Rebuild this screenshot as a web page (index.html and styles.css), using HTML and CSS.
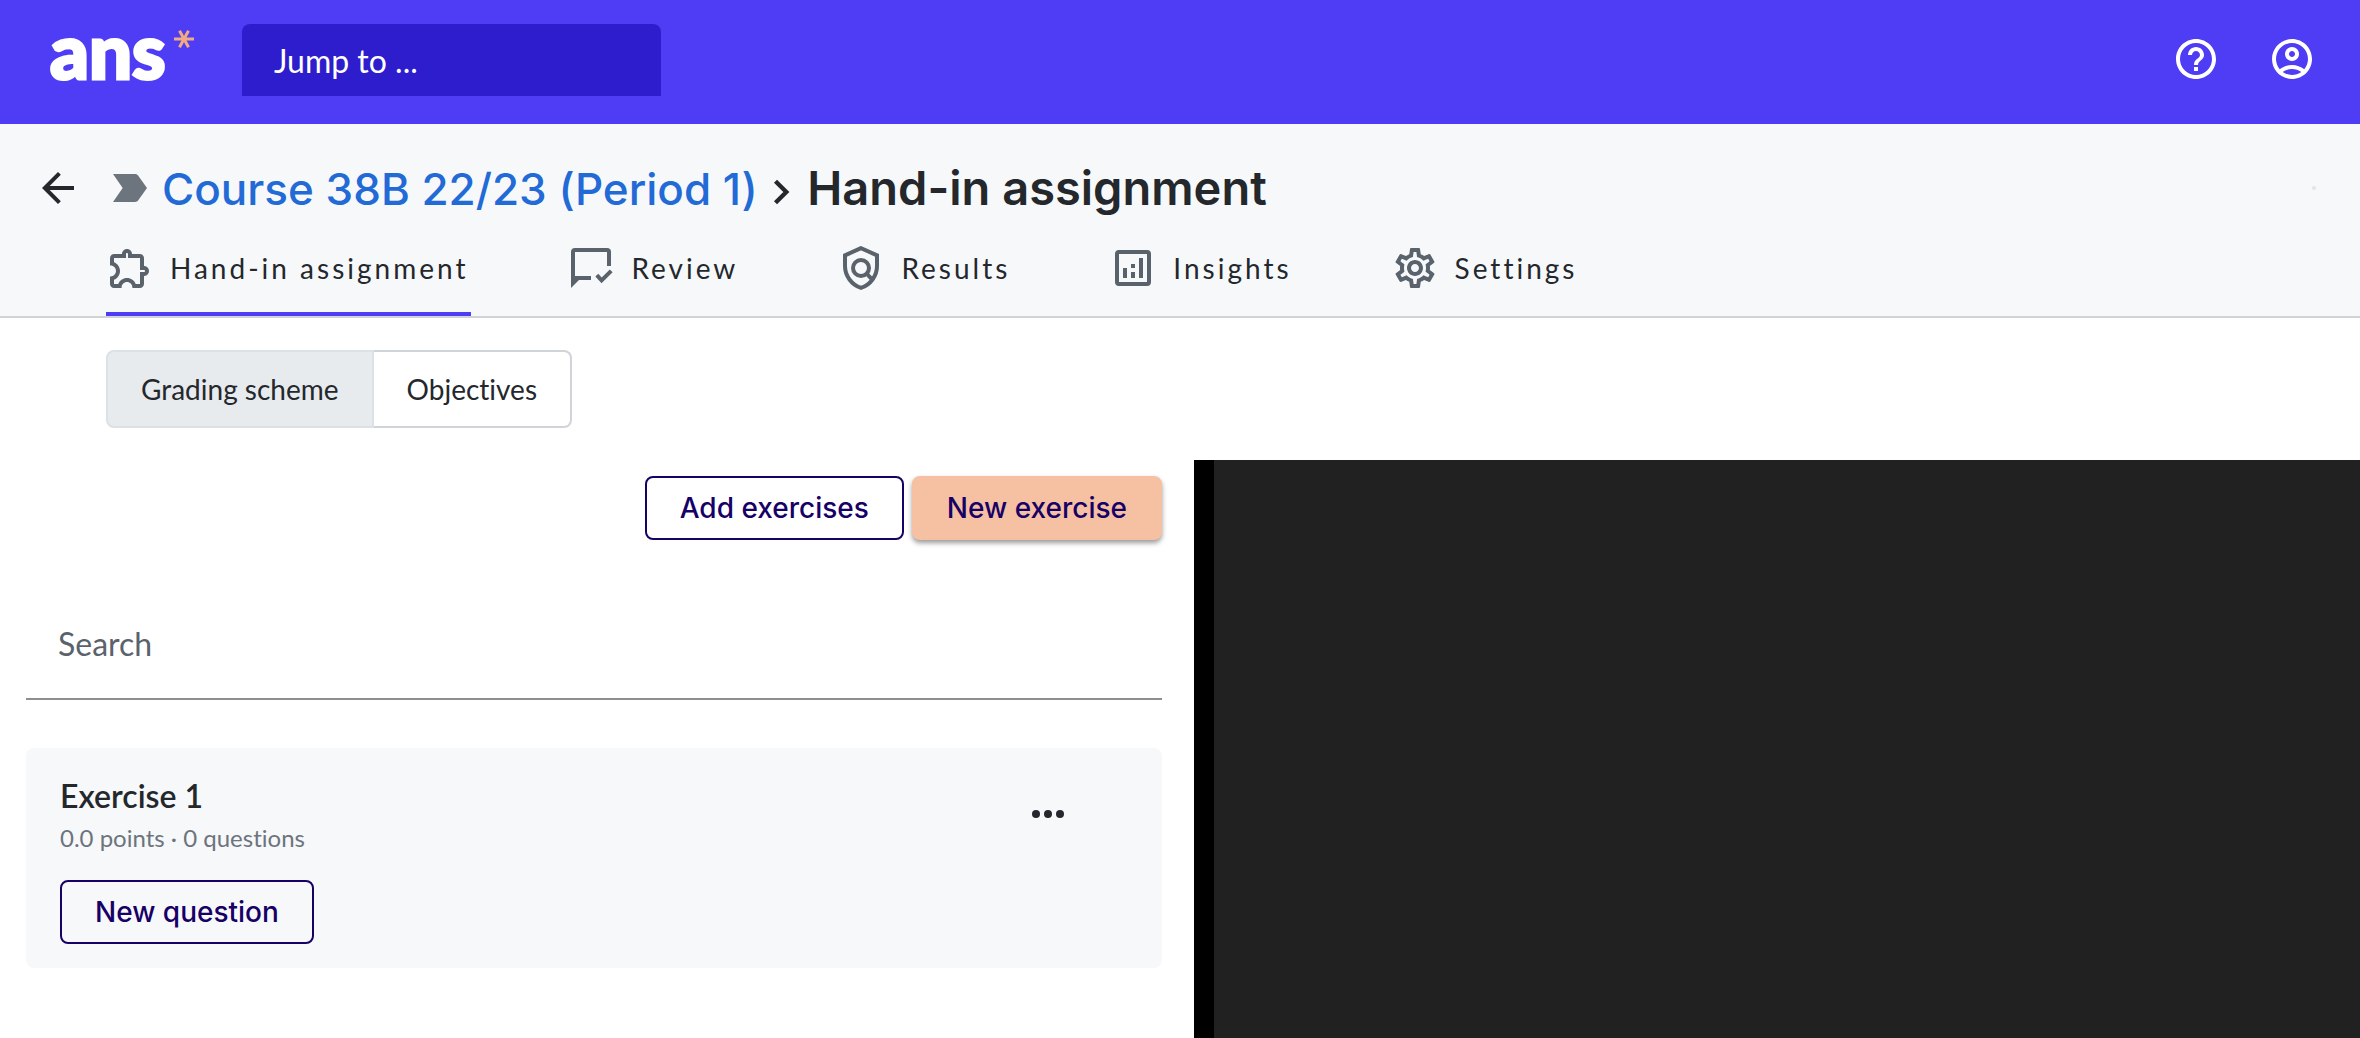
FILE: index.html
```html
<!DOCTYPE html>
<html lang="en">
<head>
    <meta charset="UTF-8">
    <meta name="viewport" content="width=device-width, initial-scale=1.0">
    <title>Hand-in assignment</title>
    <link rel="stylesheet" href="styles.css">
</head>
<body>
    <header class="topbar">
        <a class="logo" href="#" aria-label="ans">
            <span>ans</span>
            <svg class="logo-star" viewBox="0 0 20 18" aria-hidden="true">
                <path d="M0 9h20M5.5 .8l9 16.4M14.5 .8l-9 16.4"/>
            </svg>
        </a>
        <input type="text" class="jump" placeholder="Jump to ..." aria-label="Jump to">
        <div class="topbar-actions">
            <button class="icon-button" type="button" aria-label="Help">
                <svg class="icon" viewBox="0 0 24 24"><path d="M11 18h2v-2h-2v2zm1-16C6.48 2 2 6.48 2 12s4.48 10 10 10 10-4.48 10-10S17.52 2 12 2zm0 18c-4.41 0-8-3.59-8-8s3.59-8 8-8 8 3.59 8 8-3.59 8-8 8zm0-14c-2.21 0-4 1.79-4 4h2c0-1.1.9-2 2-2s2 .9 2 2c0 2-3 1.75-3 5h2c0-2.25 3-2.5 3-5 0-2.21-1.79-4-4-4z"/></svg>
            </button>
            <button class="icon-button" type="button" aria-label="Account">
                <svg class="icon" viewBox="0 0 24 24"><path d="M12 2C6.48 2 2 6.48 2 12s4.48 10 10 10 10-4.48 10-10S17.52 2 12 2zM7.35 18.5C8.66 17.56 10.26 17 12 17s3.34.56 4.65 1.5C15.34 19.44 13.74 20 12 20s-3.34-.56-4.65-1.5zm10.79-1.38C16.45 15.8 14.32 15 12 15s-4.45.8-6.14 2.12C4.7 15.73 4 13.95 4 12c0-4.42 3.58-8 8-8s8 3.58 8 8c0 1.95-.7 3.73-1.86 5.12z"/><path d="M12 6c-1.93 0-3.5 1.57-3.5 3.5S10.07 13 12 13s3.5-1.57 3.5-3.5S13.93 6 12 6zm0 5c-.83 0-1.5-.67-1.5-1.5S11.17 8 12 8s1.5.67 1.5 1.5S12.83 11 12 11z"/></svg>
            </button>
        </div>
    </header>

    <div class="subheader">
        <div class="title-row">
            <a class="back" href="#" aria-label="Back">
                <svg class="icon" viewBox="0 0 24 24"><path d="M20 11H7.83l5.59-5.59L12 4l-8 8 8 8 1.41-1.41L7.83 13H20v-2z"/></svg>
            </a>
            <svg class="icon label-icon" viewBox="0 0 24 24" aria-hidden="true"><path d="M3.5 18.99l11 .01c.67 0 1.27-.33 1.63-.84L20.5 12l-4.37-6.16c-.36-.51-.96-.84-1.63-.84l-11 .01L8.34 12 3.5 18.99z"/></svg>
            <h1><a href="#">Course 38B 22/23 (Period 1)</a> <svg class="crumb" viewBox="0 0 16 24" aria-hidden="true"><path d="M2 2l10 10-10 10"/></svg> <span>Hand-in assignment</span></h1>
            <span class="status-dot"></span>
        </div>
        <nav class="tabs">
            <a class="tab active" href="#">
                <svg class="icon" viewBox="0 0 24 24"><path d="M10.5 4.5c.28 0 .5.22.5.5v2h6v6h2c.28 0 .5.22.5.5s-.22.5-.5.5h-2v6h-2.12c-.68-1.75-2.39-3-4.38-3s-3.7 1.25-4.38 3H4v-2.12c1.75-.68 3-2.39 3-4.38 0-1.99-1.24-3.7-2.99-4.38L4 7h6V5c0-.28.22-.5.5-.5m0-2C9.12 2.5 8 3.62 8 5H4c-1.1 0-1.99.9-1.99 2v3.8h.29c1.49 0 2.7 1.21 2.7 2.7s-1.21 2.7-2.7 2.7H2V20c0 1.1.9 2 2 2h3.8v-.3c0-1.49 1.21-2.7 2.7-2.7s2.7 1.21 2.7 2.7v.3H17c1.1 0 2-.9 2-2v-4c1.38 0 2.5-1.12 2.5-2.5S20.38 11 19 11V7c0-1.1-.9-2-2-2h-4c0-1.38-1.12-2.5-2.5-2.5z"/></svg>
                Hand-in assignment
            </a>
            <a class="tab" href="#">
                <svg class="icon" viewBox="0 0 24 24"><path d="M4 4h16v7h2V4a2 2 0 0 0-2-2H4a2 2 0 0 0-2 2v18l4-4h6v-2H4z"/><path class="line" d="M14.9 15.6l2.4 2.6 4.8-4.8"/></svg>
                Review
            </a>
            <a class="tab" href="#">
                <svg class="icon" viewBox="0 0 24 24"><path class="line" d="M12 2.1L4 5.65V11c0 4.9 3.3 9.5 8 10.95 4.7-1.45 8-6.05 8-10.95V5.65z"/><circle class="line" cx="12" cy="12" r="4"/><path class="line" d="M14.7 14.7l3.4 3.6"/></svg>
                Results
            </a>
            <a class="tab" href="#">
                <svg class="icon" viewBox="0 0 24 24"><rect class="line" x="4" y="4" width="16" height="16" rx="1"/><path d="M7 12h2v5H7zM15 7h2v10h-2zM11 14h2v3h-2zM11 10h2v2h-2z"/></svg>
                Insights
            </a>
            <a class="tab" href="#">
                <svg class="icon" viewBox="0 0 24 24"><path d="M19.43 12.98c.04-.32.07-.64.07-.98 0-.34-.03-.66-.07-.98l2.11-1.65c.19-.15.24-.42.12-.64l-2-3.46c-.09-.16-.26-.25-.44-.25-.06 0-.12.01-.17.03l-2.49 1c-.52-.4-1.08-.73-1.69-.98l-.38-2.65C14.46 2.18 14.25 2 14 2h-4c-.25 0-.46.18-.49.42l-.38 2.65c-.61.25-1.17.59-1.69.98l-2.49-1c-.06-.02-.12-.03-.18-.03-.17 0-.34.09-.43.25l-2 3.46c-.13.22-.07.49.12.64l2.11 1.65c-.04.32-.07.65-.07.98 0 .33.03.66.07.98l-2.11 1.65c-.19.15-.24.42-.12.64l2 3.46c.09.16.26.25.44.25.06 0 .12-.01.17-.03l2.49-1c.52.4 1.08.73 1.69.98l.38 2.65c.03.24.24.42.49.42h4c.25 0 .46-.18.49-.42l.38-2.65c.61-.25 1.17-.59 1.69-.98l2.49 1c.06.02.12.03.18.03.17 0 .34-.09.43-.25l2-3.46c.12-.22.07-.49-.12-.64l-2.11-1.65zm-1.98-1.71c.04.31.05.52.05.73 0 .21-.02.43-.05.73l-.14 1.13.89.7 1.08.84-.7 1.21-1.27-.51-1.04-.42-.9.68c-.43.32-.84.56-1.25.73l-1.06.43-.16 1.13-.2 1.35h-1.4l-.19-1.35-.16-1.13-1.06-.43c-.43-.18-.83-.41-1.23-.71l-.91-.7-1.06.43-1.27.51-.7-1.21 1.08-.84.89-.7-.14-1.13c-.03-.31-.05-.54-.05-.74s.02-.43.05-.73l.14-1.13-.89-.7-1.08-.84.7-1.21 1.27.51 1.04.42.9-.68c.43-.32.84-.56 1.25-.73l1.06-.43.16-1.13.2-1.35h1.39l.19 1.35.16 1.13 1.06.43c.43.18.83.41 1.23.71l.91.7 1.06-.43 1.27-.51.7 1.21-1.07.85-.89.7.14 1.13zM12 8c-2.21 0-4 1.79-4 4s1.79 4 4 4 4-1.79 4-4-1.79-4-4-4zm0 6c-1.1 0-2-.9-2-2s.9-2 2-2 2 .9 2 2-.9 2-2 2z"/></svg>
                Settings
            </a>
        </nav>
    </div>

    <div class="segment">
        <button type="button" class="selected">Grading scheme</button>
        <button type="button">Objectives</button>
    </div>

    <main class="split">
        <section class="exercises">
            <div class="actions">
                <button type="button" class="btn">Add exercises</button>
                <button type="button" class="btn btn-primary">New exercise</button>
            </div>
            <input type="text" class="search" placeholder="Search" aria-label="Search">
            <article class="card">
                <div class="card-head">
                    <div>
                        <h2>Exercise 1</h2>
                        <p>0.0 points · 0 questions</p>
                    </div>
                    <button class="icon-button" type="button" aria-label="More">
                        <svg class="icon" viewBox="0 0 24 24"><circle cx="6" cy="12" r="2"/><circle cx="12" cy="12" r="2"/><circle cx="18" cy="12" r="2"/></svg>
                    </button>
                </div>
                <button type="button" class="btn">New question</button>
            </article>
        </section>
        <section class="viewer"></section>
    </main>
</body>
</html>
```
FILE: styles.css
```css
* {
    box-sizing: border-box;
}
body {
    margin: 0;
    min-height: 100vh;
    display: flex;
    flex-direction: column;
    font-family: Lato, sans-serif;
    font-size: 28px;
    font-variant-ligatures: none;
    background-color: #fff;
    color: #24282d;
}
a {
    color: inherit;
    text-decoration: none;
}
button, input {
    font: inherit;
    font-variant-ligatures: none;
    color: inherit;
    margin: 0;
}
.icon {
    display: block;
    width: 48px;
    height: 48px;
    flex: none;
    fill: currentColor;
}
.icon .line {
    fill: none;
    stroke: currentColor;
    stroke-width: 2;
}
.icon-button {
    padding: 0;
    border: none;
    background: none;
    cursor: pointer;
}

/* top bar */
.topbar {
    display: flex;
    align-items: center;
    height: 124px;
    padding: 0 44px 4px 48px;
    background-color: #4f3df5;
    color: #fff;
}
.logo {
    display: flex;
    gap: 8px;
    width: 194px;
    padding: 0 0 20px 2px;
    font-size: 76px;
    font-weight: 900;
    line-height: 72px;
    -webkit-text-stroke: 3px #fff;
}
.logo-star {
    width: 20px;
    height: 18px;
    margin-top: 16px;
    fill: none;
    stroke: #f2ab80;
    stroke-width: 3;
}
.jump {
    width: 419px;
    height: 72px;
    padding: 0 32px;
    border: none;
    border-radius: 8px 8px 0 0;
    background-color: #2e1dcd;
    font-size: 32px;
}
.jump::placeholder {
    color: #fff;
    opacity: 1;
}
.topbar-actions {
    display: flex;
    gap: 48px;
    margin-left: auto;
    padding-bottom: 2px;
}

/* breadcrumb and tabs */
.subheader {
    background-color: #f7f8fa;
    border-bottom: 2px solid #d0d4d9;
}
.title-row {
    display: flex;
    align-items: center;
    height: 96px;
    padding: 32px 44px 0 34px;
}
.label-icon {
    margin: 0 8px 0 24px;
    color: #6c747d;
}
h1 {
    margin: 0;
    font-family: Inter, sans-serif;
    font-size: 47px;
    font-weight: 600;
    line-height: 64px;
}
h1 a {
    font-size: 44px;
    font-weight: 500;
    color: #226ad6;
}
.crumb {
    width: 18px;
    height: 26px;
    margin: 0 4px;
    fill: none;
    stroke: currentColor;
    stroke-width: 4;
}
.status-dot {
    width: 4px;
    height: 4px;
    margin-left: auto;
    border-radius: 50%;
    background-color: #e1e4e9;
}
.tabs {
    display: flex;
    gap: 96px;
    padding-left: 106px;
}
.tab {
    display: flex;
    align-items: center;
    gap: 16px;
    padding: 24px 3px 20px 0;
    border-bottom: 4px solid transparent;
    letter-spacing: 3px;
}
.tab .icon {
    color: #5a626b;
}
.tab.active {
    border-bottom-color: #4f3df5;
}

.segment {
    display: flex;
    padding: 32px 106px;
}
.segment button {
    height: 78px;
    padding: 0 33px;
    border: 2px solid #ced4d9;
    border-left: none;
    border-radius: 0 8px 8px 0;
    background-color: #fff;
    cursor: pointer;
}
.segment .selected {
    border: 2px solid #dce1e5;
    border-radius: 8px 0 0 8px;
    background-color: #e7ebee;
}

/* exercise list and document viewer */
.split {
    display: grid;
    grid-template-columns: calc(50% + 14px) 1fr;
    flex: 1;
}
.exercises {
    padding: 16px 32px 16px 26px;
}
.actions {
    display: flex;
    justify-content: flex-end;
    gap: 8px;
}
.btn {
    height: 64px;
    padding: 0 33px;
    border: 2px solid #170066;
    border-radius: 8px;
    background: none;
    color: #170066;
    font-family: Inter, sans-serif;
    font-weight: 500;
    cursor: pointer;
}
.btn-primary {
    border-color: #f6c1a2;
    background-color: #f6c1a2;
    box-shadow: 0 3px 5px rgba(0, 0, 0, 0.4);
}
.search {
    display: block;
    width: 100%;
    height: 112px;
    margin: 48px 0;
    padding: 0 32px;
    border: none;
    border-bottom: 2px solid #8f8f8f;
    background: none;
    font-size: 32px;
}
.search::placeholder {
    color: #5a626b;
    opacity: 1;
}
.card {
    padding: 24px 34px;
    border-radius: 8px;
    background-color: #f7f8fa;
}
.card-head {
    display: flex;
    justify-content: space-between;
    align-items: center;
    padding-right: 56px;
    margin-bottom: 24px;
}
h2 {
    margin: 0;
    font-size: 32px;
    font-weight: 600;
    line-height: 48px;
}
.card p {
    margin: 0;
    font-size: 24px;
    line-height: 36px;
    color: #6c747d;
}
.viewer {
    border-left: 20px solid #000;
    background-color: #212121;
}
```
